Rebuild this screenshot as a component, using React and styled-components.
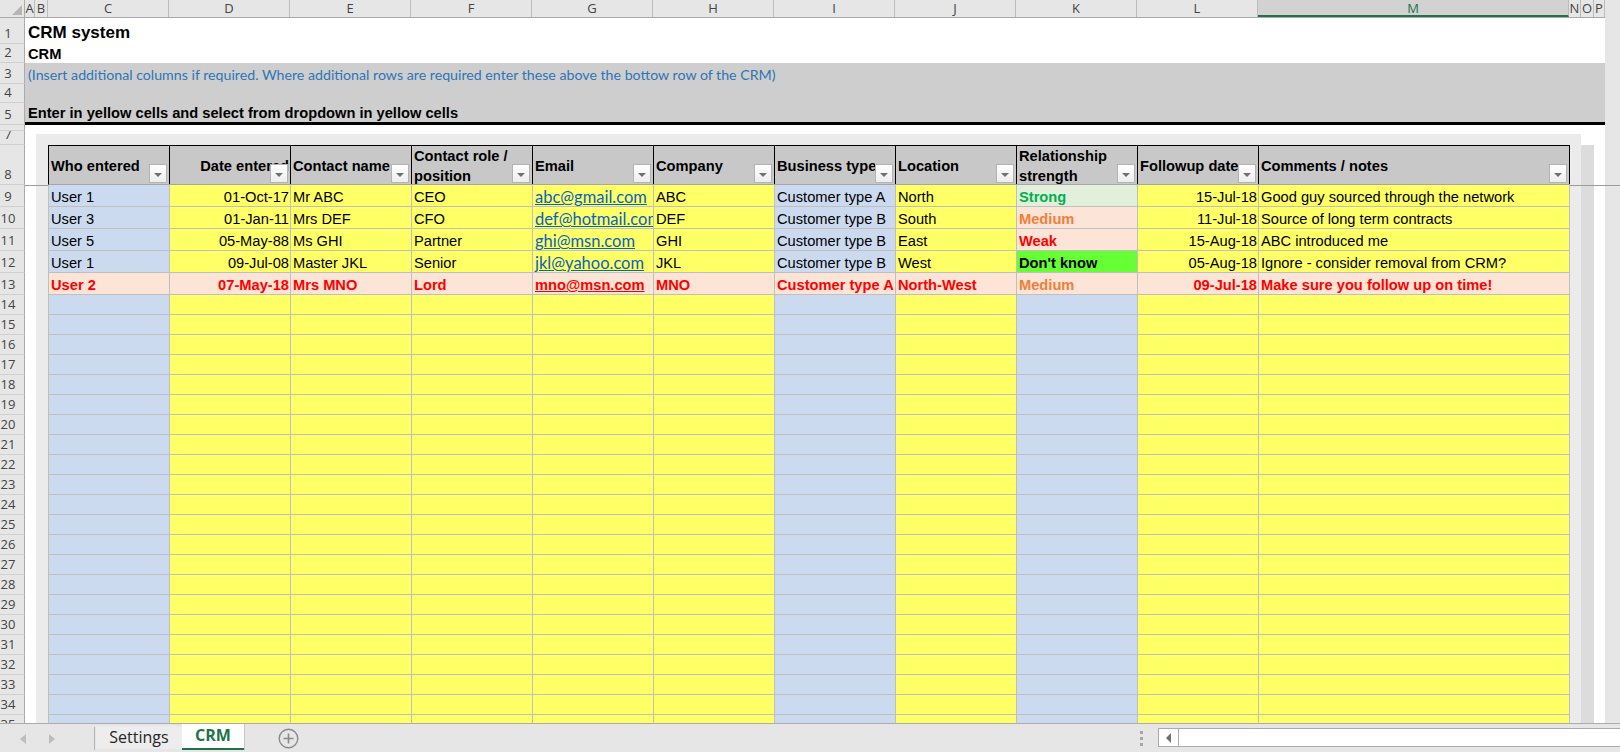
import React from 'react'
import styled, { createGlobalStyle } from 'styled-components'

const UI = '"Open Sans", "Liberation Sans", sans-serif'
const ARIAL = '"Liberation Sans", Arial, sans-serif'
const CALIBRI = 'Lato, "Liberation Sans", sans-serif'

const GlobalStyle = createGlobalStyle`
  html, body {
    margin: 0;
    padding: 0;
    background: #fff;
    overflow: hidden;
  }
`

const Window = styled.div`
  width: 1620px;
  height: 752px;
  display: flex;
  flex-direction: column;
  overflow: hidden;
  background: #fff;
`

const Sheet = styled.div`
  position: relative;
  flex: 1;
  display: flex;
  min-height: 0;
`

const GridArea = styled.div`
  flex: 1;
  display: flex;
  flex-direction: column;
  min-width: 0;
`

const VScroll = styled.div`
  width: 15px;
  flex: none;
  background: #e6e6e6;
`

const FreezeLine = styled.div`
  position: absolute;
  top: 185px;
  left: 25px;
  right: 0;
  height: 1px;
  background: #9c9c9c;
  z-index: 0;
`

/* column letters */
const ColBar = styled.div`
  display: flex;
  height: 18px;
  flex: none;
  background: #e6e6e6;
  border-bottom: 1px solid #ababab;
  box-sizing: border-box;
`

const Corner = styled.div`
  width: 25px;
  flex: none;
  border-right: 1px solid #ababab;
  box-sizing: border-box;
  display: flex;
  align-items: flex-end;
  justify-content: flex-end;
  svg { display: block; }
`

const ColLetter = styled.div`
  width: ${p => p.$w}px;
  flex: none;
  box-sizing: border-box;
  border-right: 1px solid #bcbcbc;
  background: ${p => (p.$selected ? '#d2d2d2' : 'transparent')};
  border-bottom: ${p => (p.$selected ? '2px solid #217346' : 'none')};
  color: ${p => (p.$selected ? '#217346' : '#444')};
  font: 13px/17px ${UI};
  text-align: center;
  overflow: hidden;
`

/* rows 1-5 */
const SheetRow = styled.div`
  display: flex;
  height: ${p => p.$h}px;
  flex: none;
`

const RowNum = styled.div`
  width: 25px;
  height: ${p => p.$h}px;
  flex: none;
  box-sizing: border-box;
  background: #e6e6e6;
  border-right: 1px solid #ababab;
  border-bottom: 1px solid #d0d0d0;
  display: flex;
  align-items: flex-end;
  justify-content: center;
  padding: 0 8px 2px 0;
  font: 13px/16px ${UI};
  color: #444;
  overflow: hidden;
`

const Band = styled.div`
  flex: 1;
  box-sizing: border-box;
  background: ${p => p.$bg || '#fff'};
  border-bottom: ${p => (p.$rule ? '3px solid #000' : 'none')};
  display: flex;
  align-items: flex-end;
  padding: 0 0 ${p => p.$pb || 0}px 3px;
  white-space: nowrap;
`

const Title = styled.span`
  font: bold ${p => p.$size}px/${p => p.$lh}px ${ARIAL};
  color: #000;
`

const Note = styled.span`
  font: 14.2px/18px ${CALIBRI};
  color: #2f75b5;
`

/* rows 6 and below */
const Lower = styled.div`
  flex: 1;
  display: flex;
  min-height: 0;
  overflow: hidden;
`

const RowNums = styled.div`
  width: 25px;
  flex: none;
  display: flex;
  flex-direction: column;
`

const Canvas = styled.div`
  flex: 1;
  display: flex;
  background: #fff;
  overflow: hidden;
`

const Frame = styled.div`
  width: 1545px;
  flex: none;
  box-sizing: border-box;
  margin: 9px 0 0 11px;
  padding: 11px 0 0 12px;
  background: #ebebeb;
`

const Shade = styled.div`
  width: 13px;
  flex: none;
  margin-top: 20px;
  background: #dcdcdc;
`

const Table = styled.div`
  position: relative;
  z-index: 1;
  width: 1522px;
`

const HeadRow = styled.div`
  display: flex;
  height: 40px;
  box-sizing: border-box;
  border-top: 1px solid #000;
  border-left: 1px solid #000;
  border-bottom: 1px solid #a6a6a6;
  background: #c8c8c8;
`

const HeadCell = styled.div`
  position: relative;
  width: ${p => p.$w}px;
  flex: none;
  box-sizing: border-box;
  border-right: 1px solid #000;
  display: flex;
  align-items: center;
  justify-content: ${p => (p.$align === 'right' ? 'flex-end' : 'flex-start')};
  padding: 2px ${p => (p.$align === 'right' ? 1 : 2)}px 0 2px;
  font: bold 14.67px/20px ${ARIAL};
  color: #000;
  white-space: pre;
  overflow: hidden;
`

const FilterBtn = styled.span`
  position: absolute;
  right: 2px;
  bottom: 1px;
  width: 18px;
  height: 19px;
  box-sizing: border-box;
  border: 1px solid #b3b3b3;
  background: linear-gradient(#ffffff, #ededed);
  display: flex;
  align-items: center;
  justify-content: center;

  &::after {
    content: '';
    margin-top: 3px;
    border-left: 4px solid transparent;
    border-right: 4px solid transparent;
    border-top: 4px solid #707070;
  }
`

const DataRow = styled.div`
  display: flex;
  height: ${p => p.$h}px;
  border-left: 1px solid #bfbfbf;
`

const Cell = styled.div`
  width: ${p => p.$w}px;
  flex: none;
  box-sizing: border-box;
  border-right: 1px solid #bfbfbf;
  border-bottom: 1px solid #bfbfbf;
  background: ${p => p.$bg};
  color: ${p => p.$color || '#000'};
  font: ${p => (p.$bold ? 'bold' : 'normal')} 14.67px/18px ${ARIAL};
  display: flex;
  align-items: center;
  justify-content: ${p => (p.$align === 'right' ? 'flex-end' : 'flex-start')};
  padding: 3px ${p => (p.$align === 'right' ? 1 : 2)}px 0 2px;
  white-space: nowrap;
  overflow: hidden;
`

const Mail = styled.span`
  text-decoration: underline;
  color: ${p => (p.$alert ? '#ff0000' : '#0563c1')};
  font-family: ${p => (p.$alert ? ARIAL : CALIBRI)};
  font-size: ${p => (p.$alert ? 14.67 : 16.5)}px;
`

/* sheet tabs */
const TabBar = styled.div`
  height: 29px;
  flex: none;
  box-sizing: border-box;
  background: #e6e6e6;
  border-top: 1px solid #acacac;
  display: flex;
  align-items: stretch;
`

const Nav = styled.div`
  width: 95px;
  flex: none;
  display: flex;
  align-items: center;
  box-sizing: border-box;
  border-right: 1px solid #b4b4b4;
  margin: 3px 0 2px;
  padding-left: 20px;
  gap: 23px;
`

const Arrow = styled.span`
  width: 0;
  height: 0;
  border-top: 5px solid transparent;
  border-bottom: 5px solid transparent;
  ${p => (p.$dir === 'left' ? 'border-right: 6px solid #bdbdbd;' : 'border-left: 6px solid #bdbdbd;')}
`

const Tab = styled.div`
  flex: none;
  width: ${p => p.$w}px;
  box-sizing: border-box;
  margin: ${p => (p.$active ? '0 0 2px' : '2px 0 3px 1px')};
  padding-bottom: ${p => (p.$active ? 3 : 2)}px;
  background: ${p => (p.$active ? '#fff' : '#ededed')};
  border-bottom: ${p => (p.$active ? '2px solid #217346' : 'none')};
  box-shadow: ${p => (p.$active ? '1px 0 0 #c6c6c6' : 'none')};
  display: flex;
  align-items: center;
  justify-content: center;
  font: ${p => (p.$active ? 'bold' : 'normal')} 16px/20px ${UI};
  color: ${p => (p.$active ? '#217346' : '#262626')};
`

const AddSheet = styled.div`
  flex: none;
  margin-left: 34px;
  display: flex;
  align-items: center;
  svg { display: block; }
`

const Spacer = styled.div`
  flex: 1;
`

const Dots = styled.div`
  flex: none;
  width: 3px;
  margin-right: 15px;
  display: flex;
  flex-direction: column;
  justify-content: center;
  gap: 3px;

  span {
    width: 3px;
    height: 3px;
    background: #a6a6a6;
  }
`

const HScroll = styled.div`
  width: 462px;
  flex: none;
  margin: 4px 0 5px;
  display: flex;
  box-sizing: border-box;
  border: 1px solid #ababab;
  border-right: none;
  background: #fff;
`

const ScrollBtn = styled.div`
  width: 19px;
  flex: none;
  border-right: 1px solid #ababab;
  display: flex;
  align-items: center;
  justify-content: center;

  &::after {
    content: '';
    border-top: 5px solid transparent;
    border-bottom: 5px solid transparent;
    border-right: 5px solid #6f6f6f;
  }
`

const sheetCols = [
  ['A', 10], ['B', 13], ['C', 121], ['D', 121], ['E', 121], ['F', 121], ['G', 121],
  ['H', 121], ['I', 121], ['J', 121], ['K', 121], ['L', 121], ['M', 311], ['N', 12],
  ['O', 13], ['P', 11],
]

const BLUE = '#ccdaf0'
const YELLOW = '#ffff66'
const PEACH = '#fce4d6'

const columns = [
  { key: 'who', title: 'Who entered', w: 121, bg: BLUE },
  { key: 'date', title: 'Date entered', w: 121, bg: YELLOW, align: 'right', headAlign: 'right' },
  { key: 'name', title: 'Contact name', w: 121, bg: YELLOW },
  { key: 'role', title: 'Contact role /\nposition', w: 121, bg: YELLOW },
  { key: 'email', title: 'Email', w: 121, bg: YELLOW },
  { key: 'company', title: 'Company', w: 121, bg: YELLOW },
  { key: 'type', title: 'Business type', w: 121, bg: BLUE },
  { key: 'loc', title: 'Location', w: 121, bg: YELLOW },
  { key: 'rel', title: 'Relationship\nstrength', w: 121, bg: BLUE },
  { key: 'follow', title: 'Followup date', w: 121, bg: YELLOW, align: 'right' },
  { key: 'notes', title: 'Comments / notes', w: 311, bg: YELLOW },
]

const strength = {
  Strong: { bg: '#e2efda', color: '#00b050' },
  Medium: { bg: PEACH, color: '#f07f3c' },
  Weak: { bg: PEACH, color: '#ff0000' },
  "Don't know": { bg: '#66ff33', color: '#000' },
}

const contacts = [
  { who: 'User 1', date: '01-Oct-17', name: 'Mr ABC', role: 'CEO', email: 'abc@gmail.com', company: 'ABC', type: 'Customer type A', loc: 'North', rel: 'Strong', follow: '15-Jul-18', notes: 'Good guy sourced through the network' },
  { who: 'User 3', date: '01-Jan-11', name: 'Mrs DEF', role: 'CFO', email: 'def@hotmail.com', company: 'DEF', type: 'Customer type B', loc: 'South', rel: 'Medium', follow: '11-Jul-18', notes: 'Source of long term contracts' },
  { who: 'User 5', date: '05-May-88', name: 'Ms GHI', role: 'Partner', email: 'ghi@msn.com', company: 'GHI', type: 'Customer type B', loc: 'East', rel: 'Weak', follow: '15-Aug-18', notes: 'ABC introduced me' },
  { who: 'User 1', date: '09-Jul-08', name: 'Master JKL', role: 'Senior', email: 'jkl@yahoo.com', company: 'JKL', type: 'Customer type B', loc: 'West', rel: "Don't know", follow: '05-Aug-18', notes: 'Ignore - consider removal from CRM?' },
  { who: 'User 2', date: '07-May-18', name: 'Mrs MNO', role: 'Lord', email: 'mno@msn.com', company: 'MNO', type: 'Customer type A', loc: 'North-West', rel: 'Medium', follow: '09-Jul-18', notes: 'Make sure you follow up on time!', alert: true },
]

const lowerRows = [
  { n: 6, h: 6 },
  { n: 7, h: 14 },
  { n: 8, h: 40 },
  ...[9, 10, 11, 12, 13].map(n => ({ n, h: 22 })),
  ...Array.from({ length: 23 }, (_, i) => ({ n: 14 + i, h: 20 })),
]

const EMPTY_ROWS = 23

function CornerMark() {
  return (
    <svg width="14" height="14" viewBox="0 0 14 14">
      <polygon points="12,2 12,12 2,12" fill="#b5b5b5" />
    </svg>
  )
}

function PlusCircle() {
  return (
    <svg width="21" height="21" viewBox="0 0 21 21">
      <circle cx="10.5" cy="10.5" r="9.3" fill="none" stroke="#8a8a8a" strokeWidth="1.4" />
      <path d="M10.5 5.5v10M5.5 10.5h10" stroke="#8a8a8a" strokeWidth="1.6" />
    </svg>
  )
}

function ContactRow({ row }) {
  return (
    <DataRow $h={22}>
      {columns.map(col => {
        const value = row[col.key]
        let bg = row.alert ? PEACH : col.bg
        let color = row.alert ? '#ff0000' : '#000'
        let bold = row.alert
        if (col.key === 'rel') {
          bg = row.alert ? PEACH : strength[value].bg
          color = strength[value].color
          bold = true
        }
        return (
          <Cell key={col.key} $w={col.w} $bg={bg} $color={color} $bold={bold} $align={col.align}>
            {col.key === 'email' ? <Mail $alert={row.alert}>{value}</Mail> : value}
          </Cell>
        )
      })}
    </DataRow>
  )
}

function EmptyRow() {
  return (
    <DataRow $h={20}>
      {columns.map(col => (
        <Cell key={col.key} $w={col.w} $bg={col.bg} />
      ))}
    </DataRow>
  )
}

export default function App() {
  return (
    <>
      <GlobalStyle />
      <Window>
        <Sheet>
          <FreezeLine />
          <GridArea>
            <ColBar>
              <Corner><CornerMark /></Corner>
              {sheetCols.map(([letter, w]) => (
                <ColLetter key={letter} $w={w} $selected={letter === 'M'}>{letter}</ColLetter>
              ))}
            </ColBar>

            <SheetRow $h={26}>
              <RowNum $h={26}>1</RowNum>
              <Band $pb={1}><Title $size={17} $lh={20}>CRM system</Title></Band>
            </SheetRow>
            <SheetRow $h={19}>
              <RowNum $h={19}>2</RowNum>
              <Band><Title $size={14.67} $lh={18}>CRM</Title></Band>
            </SheetRow>
            <SheetRow $h={21}>
              <RowNum $h={21}>3</RowNum>
              <Band $bg="#cecece">
                <Note>(Insert additional columns if required. Where additional rows are required enter these above the bottow row of the CRM)</Note>
              </Band>
            </SheetRow>
            <SheetRow $h={19}>
              <RowNum $h={19}>4</RowNum>
              <Band $bg="#cecece" />
            </SheetRow>
            <SheetRow $h={22}>
              <RowNum $h={22}>5</RowNum>
              <Band $bg="#cecece" $rule>
                <Title $size={14.67} $lh={18}>Enter in yellow cells and select from dropdown in yellow cells</Title>
              </Band>
            </SheetRow>

            <Lower>
              <RowNums>
                {lowerRows.map(r => (
                  <RowNum key={r.n} $h={r.h}>{r.n}</RowNum>
                ))}
              </RowNums>
              <Canvas>
                <Frame>
                  <Table>
                    <HeadRow>
                      {columns.map(col => (
                        <HeadCell key={col.key} $w={col.w} $align={col.headAlign}>
                          {col.title}
                          <FilterBtn />
                        </HeadCell>
                      ))}
                    </HeadRow>
                    {contacts.map((row, i) => (
                      <ContactRow key={i} row={row} />
                    ))}
                    {Array.from({ length: EMPTY_ROWS }, (_, i) => (
                      <EmptyRow key={i} />
                    ))}
                  </Table>
                </Frame>
                <Shade />
              </Canvas>
            </Lower>
          </GridArea>
          <VScroll />
        </Sheet>

        <TabBar>
          <Nav>
            <Arrow $dir="left" />
            <Arrow $dir="right" />
          </Nav>
          <Tab $w={86}>Settings</Tab>
          <Tab $w={62} $active>CRM</Tab>
          <AddSheet><PlusCircle /></AddSheet>
          <Spacer />
          <Dots><span /><span /><span /></Dots>
          <HScroll>
            <ScrollBtn />
          </HScroll>
        </TabBar>
      </Window>
    </>
  )
}
